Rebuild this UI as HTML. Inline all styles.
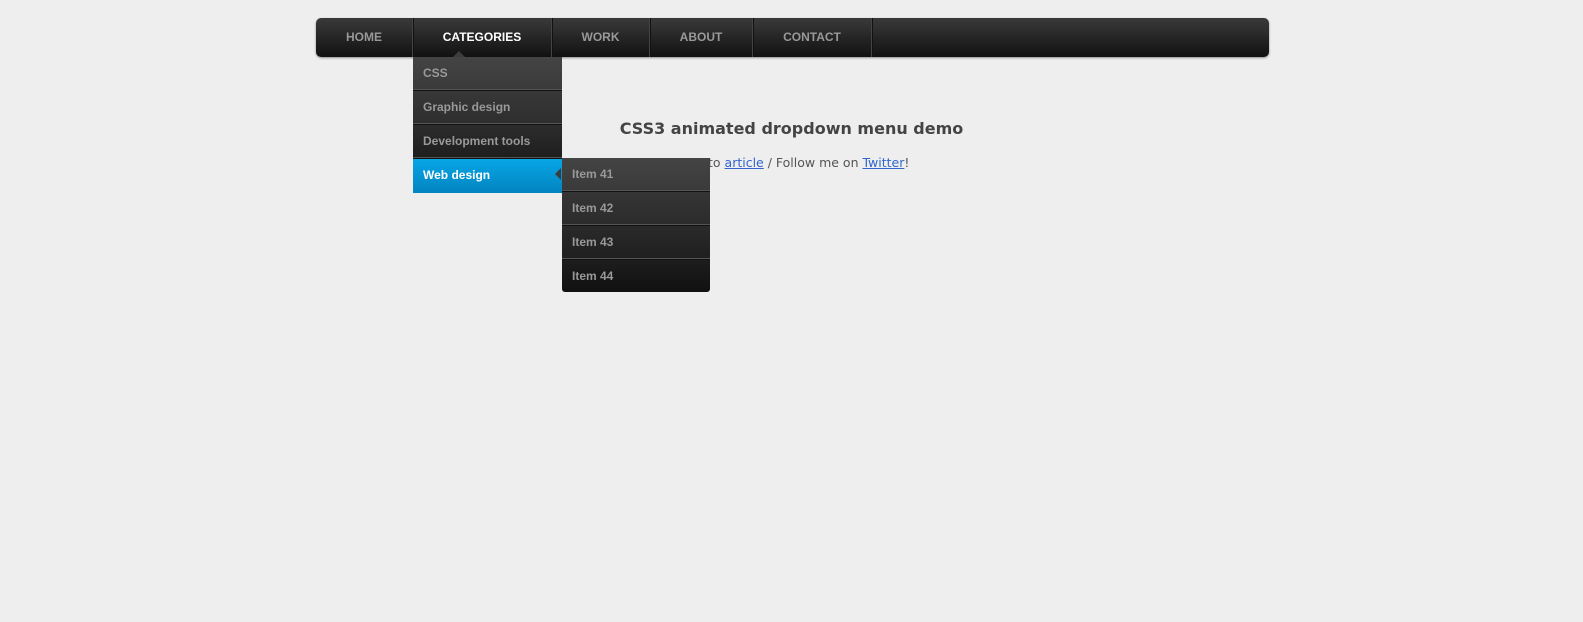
<!DOCTYPE html>
<html><head><style>
body{margin:0;width:1583px;height:622px;background:#eeeeee;font-family:"Liberation Sans",Arial,sans-serif;position:relative;overflow:hidden}
.nav{position:absolute;left:316px;top:18px;width:953px;height:39px;border-radius:5px;background:linear-gradient(#3a3a3a,#111);box-shadow:0 1px 2px rgba(0,0,0,.4)}
.nav a{position:absolute;top:0;height:39px;line-height:39px;text-align:center;font-size:12px;font-weight:bold;color:#999;border-right:1px solid #444;box-shadow:1px 0 0 #111}
.dd{position:absolute;left:413px;top:57px;width:149px}
.dd div,.sub div{height:33px;line-height:33px;padding-left:10px;font-size:12px;font-weight:bold;color:#999;border-bottom:1px solid #111;box-shadow:inset 0 -1px 0 #555}
.sub{position:absolute;left:562px;top:158px;width:148px;border-radius:0 0 3px 3px;overflow:hidden}
h1{position:absolute;left:0;width:1583px;top:119px;margin:0;text-align:center;font:bold 16px "DejaVu Sans",sans-serif;color:#444}
p{position:absolute;left:708px;top:155px;margin:0;font:12.5px "DejaVu Sans",sans-serif;color:#555}
p u{color:#36c}
</style></head><body>
<h1>CSS3 animated dropdown menu demo</h1>
<p>to <u>article</u> / Follow me on <u>Twitter</u>!</p>
<div class="nav">
<a style="left:0;width:96px">HOME</a>
<a style="left:97px;width:138px;color:#fff">CATEGORIES</a>
<a style="left:236px;width:97px">WORK</a>
<a style="left:334px;width:102px">ABOUT</a>
<a style="left:437px;width:118px">CONTACT</a>
</div>
<div style="position:absolute;left:453px;top:51px;width:0;height:0;border:6px solid transparent;border-bottom-color:#3d3d3d;border-top:0"></div>
<div class="dd">
<div style="background:linear-gradient(#444,#3a3a3a)">CSS</div>
<div style="background:linear-gradient(#383838,#2e2e2e)">Graphic design</div>
<div style="background:linear-gradient(#2c2c2c,#1e1e1e)">Development tools</div>
<div style="background:linear-gradient(#08a6e6,#0284c0);color:#fff;border:0;box-shadow:none;height:34px">Web design</div>
</div>
<div style="position:absolute;left:555px;top:168px;width:0;height:0;border:6px solid transparent;border-right-color:#3d3d3d;border-left:0"></div>
<div class="sub">
<div style="background:linear-gradient(#444,#3a3a3a)">Item 41</div>
<div style="background:linear-gradient(#353535,#2c2c2c)">Item 42</div>
<div style="background:linear-gradient(#2a2a2a,#1f1f1f)">Item 43</div>
<div style="background:linear-gradient(#1d1d1d,#111);border:0;box-shadow:none;height:32px">Item 44</div>
</div>
</body></html>
